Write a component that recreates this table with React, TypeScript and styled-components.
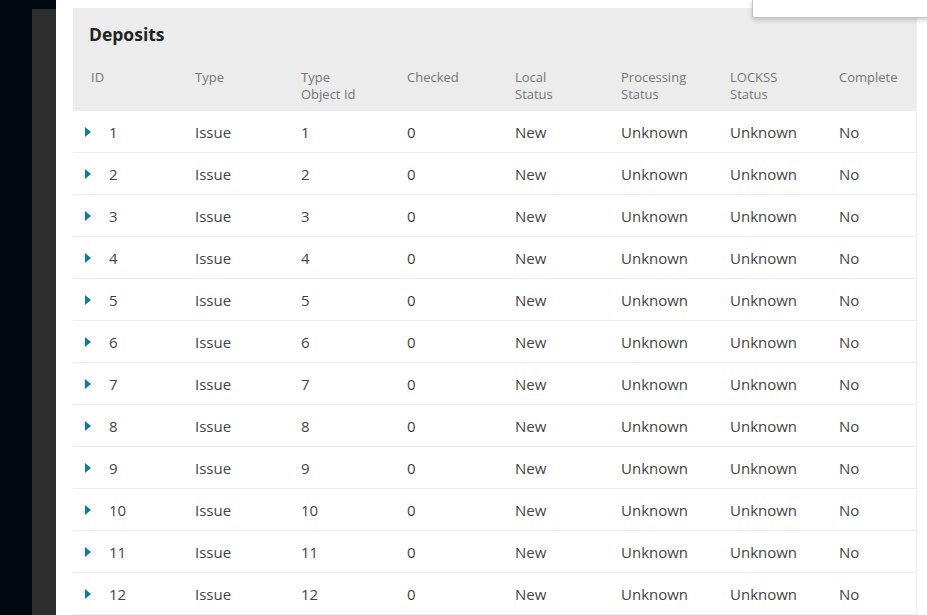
import React from "react";
import styled, { createGlobalStyle } from "styled-components";

const Global = createGlobalStyle`
  html, body { margin: 0; padding: 0; }
  body {
    background: #010810;
    font-family: "Open Sans", "Noto Sans", sans-serif;
    overflow: hidden;
  }
`;

const Page = styled.div`
  display: flex;
  height: 615px;
  position: relative;
`;

const DarkRail = styled.div`
  width: 32px;
  flex: none;
`;

const GrayRail = styled.div`
  width: 24px;
  flex: none;
  margin-top: 9px;
  background: #2e2e2e;
`;

const Main = styled.main`
  flex: 1;
  background: #ffffff;
  padding: 8px 10px 0 17px;
  overflow: hidden;
`;

const Card = styled.section`
  border-right: 1px solid #f0f0f0;
  background: #fff;
`;

const CardHead = styled.div`
  background: #ececec;
  padding: 13px 0 0 0;
`;

const Title = styled.h2`
  margin: 0;
  padding: 0 16px;
  font-size: 17.5px;
  font-weight: 700;
  color: #222;
  line-height: 26px;
`;

const cols = "104px 106px 106px 108px 106px 109px 109px 1fr";

const HeadRow = styled.div`
  display: grid;
  grid-template-columns: 18px ${cols};
  padding-top: 22px;
  height: 64px;
  box-sizing: border-box;
`;

const HeadCell = styled.div`
  font-size: 13px;
  line-height: 17px;
  color: #777;
  white-space: pre-line;
`;

const Row = styled.div`
  display: grid;
  grid-template-columns: 18px ${cols};
  height: 42px;
  align-items: center;
  border-bottom: 1px solid #ececec;
  box-sizing: border-box;
`;

const Cell = styled.div`
  font-size: 15px;
  color: #444;
  white-space: nowrap;
`;

const IdCell = styled(Cell)`
  margin-left: -6px;
  display: flex;
  align-items: center;
  gap: 18px;
`;

const Expander = styled.span`
  width: 0;
  height: 0;
  border-top: 5px solid transparent;
  border-bottom: 5px solid transparent;
  border-left: 6px solid #0b7ba6;
`;

const Popup = styled.div`
  position: absolute;
  top: -2px;
  left: 752px;
  width: 190px;
  height: 18px;
  background: #fff;
  border: 1px solid #c4c4c4;
  border-radius: 3px;
  box-shadow: 0 2px 5px rgba(0, 0, 0, 0.2);
`;

const headers = [
  "ID",
  "Type",
  "Type\nObject Id",
  "Checked",
  "Local\nStatus",
  "Processing\nStatus",
  "LOCKSS\nStatus",
  "Complete",
];

const rows = Array.from({ length: 12 }, (_, i) => i + 1);

export default function App() {
  return (
    <>
      <Global />
      <Page>
        <DarkRail />
        <GrayRail />
        <Main>
          <Card>
            <CardHead>
              <Title>Deposits</Title>
              <HeadRow>
                <span />
                {headers.map((h) => (
                  <HeadCell key={h}>{h}</HeadCell>
                ))}
              </HeadRow>
            </CardHead>
            {rows.map((n) => (
              <Row key={n}>
                <span />
                <IdCell>
                  <Expander />
                  {n}
                </IdCell>
                <Cell>Issue</Cell>
                <Cell>{n}</Cell>
                <Cell>0</Cell>
                <Cell>New</Cell>
                <Cell>Unknown</Cell>
                <Cell>Unknown</Cell>
                <Cell>No</Cell>
              </Row>
            ))}
          </Card>
        </Main>
        <Popup />
      </Page>
    </>
  );
}
